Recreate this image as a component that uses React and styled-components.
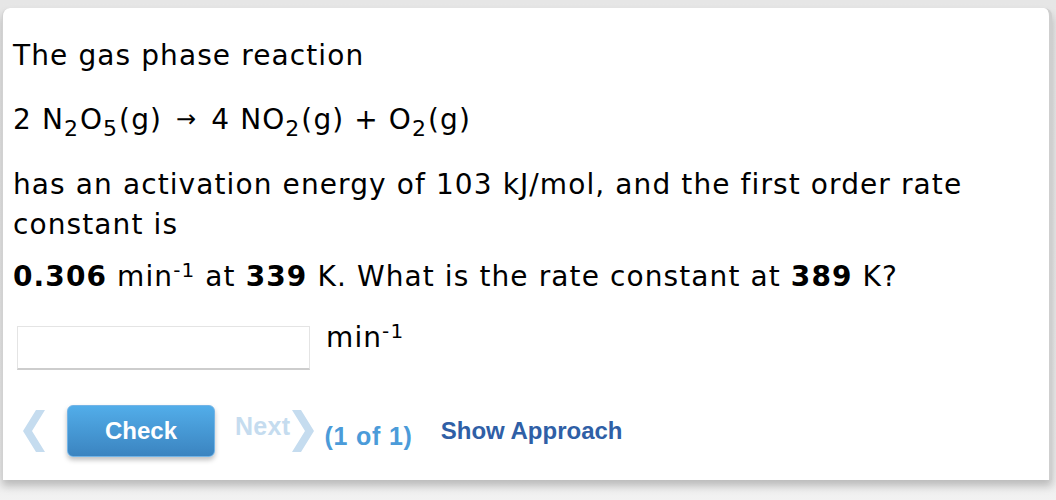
import React from 'react';
import styled, { createGlobalStyle } from 'styled-components';

const GlobalStyle = createGlobalStyle`
  html, body {
    margin: 0;
    padding: 0;
    background: #ececec;
  }
  body {
    font-family: "DejaVu Sans", Verdana, sans-serif;
  }
`;

const Page = styled.div`
  width: 1056px;
  height: 500px;
  padding: 8px 4px 0 2px;
  box-sizing: border-box;
  background: linear-gradient(#e6e6e6, #ececec 470px, #f2f2f2);
`;

const Card = styled.div`
  background: #fff;
  border-left: 1px solid #d2d2d2;
  border-right: 3px solid #cfcfcf;
  border-radius: 8px 8px 0 0;
  box-shadow: 0 6px 8px rgba(0, 0, 0, 0.22);
  height: 472px;
  box-sizing: border-box;
  padding: 28px 10px 0 10px;
`;

const Para = styled.p`
  margin: 0 0 ${p => p.$gap || 20}px;
  font-size: 28px;
  line-height: 40px;
  letter-spacing: 1.1px;
  color: #000;
`;

const Sub = styled.sub`
  font-size: 22px;
  letter-spacing: 2px;
  vertical-align: -7px;
  line-height: 0;
`;

const Sup = styled.sup`
  font-size: 20px;
  vertical-align: 9px;
  line-height: 0;
`;

const Arrow = styled.span`
  font-family: "DejaVu Sans", sans-serif;
  font-size: 24px;
  margin: 0 4px;
  vertical-align: 2px;
`;

const AnswerRow = styled.div`
  display: flex;
  align-items: flex-start;
  gap: 16px;
  margin: 29px 0 0 4px;
`;

const Field = styled.input`
  width: 293px;
  height: 44px;
  box-sizing: border-box;
  border: 1px solid #e4e4e4;
  border-bottom: 2px solid #cdcdcd;
  background: #fff;
  outline: none;
`;

const Unit = styled.span`
  font-size: 28px;
  line-height: 40px;
  letter-spacing: 1.1px;
  margin-top: -8px;
`;

const Controls = styled.div`
  display: flex;
  align-items: center;
  margin: 35px 0 0 8px;
  font-family: "Liberation Sans", Arial, sans-serif;
  font-weight: bold;
`;

const Chevron = styled.svg`
  width: 26px;
  height: 42px;
  flex: none;
`;

const CheckButton = styled.button`
  width: 148px;
  height: 52px;
  margin: 0 20px 0 20px;
  border: 1px solid #73b4e6;
  border-radius: 6px;
  background: linear-gradient(#52ade9, #3b84c0);
  color: #fff;
  font-family: "Liberation Sans", Arial, sans-serif;
  font-weight: bold;
  font-size: 24px;
  box-shadow: 0 3px 5px rgba(0, 0, 0, 0.25);
`;

const NextLabel = styled.span`
  color: #c5dcef;
  font-size: 25px;
  margin-top: -10px;
  letter-spacing: 0.3px;
`;

const Counter = styled.span`
  color: #4b9bd9;
  font-size: 25px;
  letter-spacing: 0.8px;
  margin: 10px 0 0 8px;
`;

const Approach = styled.a`
  color: #2f5fa6;
  font-size: 24px;
  margin: 0 0 0 28px;
  text-decoration: none;
`;

const Chev = ({ dir }) => (
  <Chevron viewBox="0 0 26 42">
    <path
      d={dir === 'left' ? 'M24 0 L15 0 L2 21 L15 42 L24 42 L11 21 Z' : 'M2 0 L11 0 L24 21 L11 42 L2 42 L15 21 Z'}
      fill="#c5dcef"
    />
  </Chevron>
);

export default function App() {
  return (
    <Page>
      <GlobalStyle />
      <Card>
        <Para $gap={23}>The gas phase reaction</Para>
        <Para $gap={25}>
          2 N<Sub>2</Sub>O<Sub>5</Sub>(g) <Arrow>→</Arrow> 4 NO<Sub>2</Sub>(g) + O<Sub>2</Sub>(g)
        </Para>
        <Para $gap={12}>
          has an activation energy of 103 kJ/mol, and the first order rate constant is
        </Para>
        <Para $gap={0}>
          <b>0.306</b> min<Sup>-1</Sup> at <b>339</b> K. What is the rate constant at <b>389</b> K?
        </Para>
        <AnswerRow>
          <Field type="text" />
          <Unit>
            min<Sup>-1</Sup>
          </Unit>
        </AnswerRow>
        <Controls>
          <Chev dir="left" />
          <CheckButton>Check</CheckButton>
          <NextLabel>Next</NextLabel>
          <Chev dir="right" />
          <Counter>(1 of 1)</Counter>
          <Approach href="#">Show Approach</Approach>
        </Controls>
      </Card>
    </Page>
  );
}
